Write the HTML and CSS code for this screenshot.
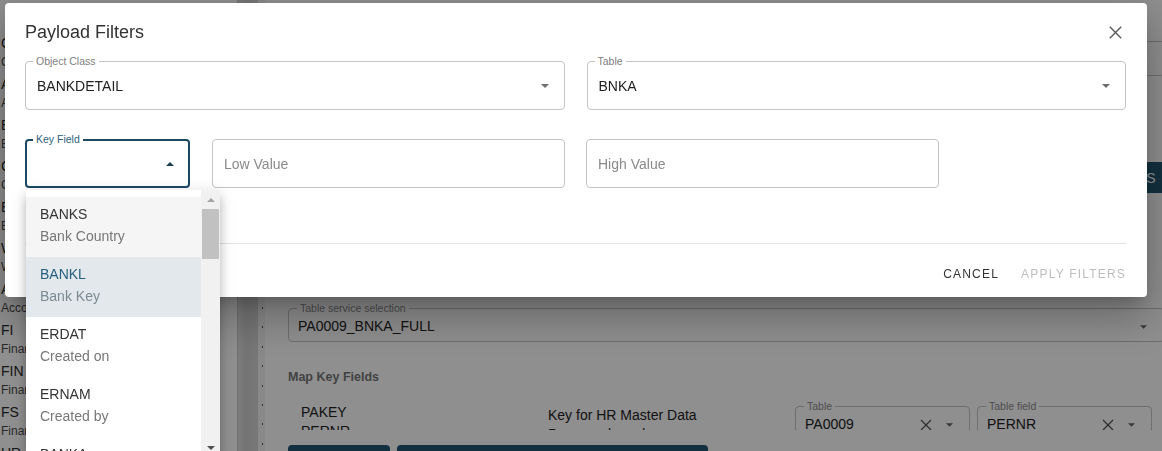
FILE: index.html
```html
<!DOCTYPE html>
<html lang="en">
<head>
<meta charset="utf-8">
<title>Payload Filters</title>
<link rel="stylesheet" href="styles.css">
</head>
<body>
<div class="page">
  <aside class="sidebar">
    <div class="side-item"><div class="side-code">CA</div><div class="side-desc">Cross-Application</div></div>
    <div class="side-item"><div class="side-code">AM</div><div class="side-desc">Asset Management</div></div>
    <div class="side-item"><div class="side-code">BC</div><div class="side-desc">Basis Components</div></div>
    <div class="side-item"><div class="side-code">CO</div><div class="side-desc">Controlling</div></div>
    <div class="side-item"><div class="side-code">EC</div><div class="side-desc">Enterprise Controlling</div></div>
    <div class="side-item"><div class="side-code">WF</div><div class="side-desc">Workflow</div></div>
    <div class="side-item"><div class="side-code">AC</div><div class="side-desc">Accounting</div></div>
    <div class="side-item"><div class="side-code">FI</div><div class="side-desc">Financial Accounting</div></div>
    <div class="side-item"><div class="side-code">FIN</div><div class="side-desc">Financials</div></div>
    <div class="side-item"><div class="side-code">FS</div><div class="side-desc">Financial Services</div></div>
    <div class="side-item"><div class="side-code">HR</div><div class="side-desc">Human Resources</div></div>
  </aside>
  <div class="splitter"></div>
  <div class="gutter"><div class="dots"></div></div>
  <main class="main">
    <div class="bg-field top-field"></div>
    <div class="bg-toolbar"><button class="bg-btn toolbar-btn">FILTERS</button></div>
    <div class="bg-field service">
      <span class="bg-label">Table service selection</span>
      <span class="bg-value">PA0009_BNKA_FULL</span>
      <svg class="bg-caret" width="7" height="4" viewBox="0 0 8 4"><path d="M0 0h8L4 4z"/></svg>
    </div>
    <div class="section-title">Map Key Fields</div>
    <div class="mapping">
      <div class="map-row">
        <div class="map-cell"><div>PAKEY</div><div>PERNR</div></div>
        <div class="map-cell desc-cell"><div>Key for HR Master Data</div><div>Personnel number</div></div>
        <div class="bg-field map-select">
          <span class="bg-label">Table</span>
          <span class="bg-value">PA0009</span>
          <svg class="bg-clear" width="12" height="12" viewBox="0 0 12 12"><path d="M1 1L11 11M11 1L1 11"/></svg>
          <svg class="bg-caret" width="7" height="4" viewBox="0 0 8 4"><path d="M0 0h8L4 4z"/></svg>
        </div>
        <div class="bg-field map-select">
          <span class="bg-label">Table field</span>
          <span class="bg-value">PERNR</span>
          <svg class="bg-clear" width="12" height="12" viewBox="0 0 12 12"><path d="M1 1L11 11M11 1L1 11"/></svg>
          <svg class="bg-caret" width="7" height="4" viewBox="0 0 8 4"><path d="M0 0h8L4 4z"/></svg>
        </div>
      </div>
    </div>
    <div class="bg-actions">
      <button class="bg-btn btn-small">ADD ROW</button>
      <button class="bg-btn btn-wide">SAVE KEY FIELD MAPPING</button>
    </div>
  </main>
</div>

<div class="backdrop"></div>

<div class="dialog" role="dialog">
  <div class="dialog-header">
    <h2 class="dialog-title">Payload Filters</h2>
    <button class="close-btn" aria-label="Close">
      <svg width="13" height="13" viewBox="0 0 13 13"><path d="M0.8 0.8L12.2 12.2M12.2 0.8L0.8 12.2"/></svg>
    </button>
  </div>
  <div class="row row-two">
    <div class="field">
      <span class="field-label">Object Class</span>
      <span class="field-value">BANKDETAIL</span>
      <svg class="caret" width="8" height="4" viewBox="0 0 8 4"><path d="M0 0h8L4 4z"/></svg>
    </div>
    <div class="field">
      <span class="field-label">Table</span>
      <span class="field-value">BNKA</span>
      <svg class="caret" width="8" height="4" viewBox="0 0 8 4"><path d="M0 0h8L4 4z"/></svg>
    </div>
  </div>
  <div class="row row-three">
    <div class="field focused key-field">
      <span class="field-label">Key Field</span>
      <svg class="caret caret-up" width="8" height="4" viewBox="0 0 8 4"><path d="M0 4h8L4 0z"/></svg>
    </div>
    <div class="field low-field"><span class="placeholder">Low Value</span></div>
    <div class="field high-field"><span class="placeholder">High Value</span></div>
  </div>
  <div class="divider"></div>
  <div class="actions">
    <button class="text-btn">CANCEL</button>
    <button class="text-btn disabled">APPLY FILTERS</button>
  </div>
</div>

<div class="menu" role="listbox">
  <div class="menu-list">
    <div class="menu-item hover"><div class="mi-code">BANKS</div><div class="mi-desc">Bank Country</div></div>
    <div class="menu-item selected"><div class="mi-code">BANKL</div><div class="mi-desc">Bank Key</div></div>
    <div class="menu-item"><div class="mi-code">ERDAT</div><div class="mi-desc">Created on</div></div>
    <div class="menu-item"><div class="mi-code">ERNAM</div><div class="mi-desc">Created by</div></div>
    <div class="menu-item"><div class="mi-code">BANKA</div><div class="mi-desc">Name of Bank</div></div>
  </div>
  <div class="scrollbar">
    <div class="sb-btn"><svg width="8" height="4" viewBox="0 0 8 4"><path class="sb-up" d="M0 4h8L4 0z"/></svg></div>
    <div class="sb-thumb"></div>
    <div class="sb-track"></div>
    <div class="sb-btn"><svg width="8" height="4" viewBox="0 0 8 4"><path class="sb-down" d="M0 0h8L4 4z"/></svg></div>
  </div>
</div>
</body>
</html>
```

FILE: styles.css
```css
* { box-sizing: border-box; }

html, body {
  margin: 0;
  padding: 0;
  width: 100%;
  height: 100%;
  overflow: hidden;
}

body {
  font-family: "Liberation Sans", Arial, sans-serif;
  color: #222;
  background: #fff;
}

button {
  font-family: inherit;
  border: none;
  background: none;
  padding: 0;
  margin: 0;
  cursor: pointer;
}

/* ---------- background page ---------- */
.page {
  display: flex;
  height: 451px;
  overflow: hidden;
}

.sidebar {
  width: 237px;
  flex: none;
  background: #fff;
  padding-top: 32px;
  overflow: hidden;
}

.side-item {
  padding: 1px 0 1px 1px;
  white-space: nowrap;
}

.side-code {
  font-size: 14px;
  line-height: 20px;
  color: #2a2a2a;
}

.side-desc {
  font-size: 12px;
  line-height: 19px;
  color: #4a4a4a;
}

.splitter {
  width: 21px;
  flex: none;
  background: linear-gradient(to right, #dedede, #cfcfcf 40%, #d6d6d6);
  border-left: 1px solid #c8c8c8;
}

.gutter {
  width: 7px;
  flex: none;
  background: #f4f4f4;
}

.dots {
  margin-left: 4px;
  width: 1px;
  height: 100%;
  background: repeating-linear-gradient(to bottom, #555 0 2px, transparent 2px 19.4px);
  background-position: 0 16px;
}

.main {
  flex: 1;
  min-width: 0;
  padding-left: 23px;
  display: flex;
  flex-direction: column;
  overflow: hidden;
  background: #fff;
}

.bg-field {
  position: relative;
  border: 1px solid #c4c4c4;
  border-radius: 4px;
  display: flex;
  align-items: center;
}

.top-field {
  margin-top: 41px;
  height: 35px;
  margin-right: -3px;
  flex: none;
}

.bg-toolbar {
  margin-top: 86px;
  height: 31px;
  display: flex;
  justify-content: flex-end;
  flex: none;
}

.bg-btn {
  background: #225772;
  color: #fff;
  border-radius: 4px;
  font-size: 14px;
  letter-spacing: 0.4px;
}

.toolbar-btn {
  height: 31px;
  padding: 0 16px;
  margin-right: -10px;
}

.service {
  margin-top: 115px;
  height: 34px;
  margin-right: -3px;
  padding: 3px 17px 0 9px;
  flex: none;
}

.bg-label {
  position: absolute;
  left: 8px;
  top: -7px;
  padding: 0 3px;
  background: #fff;
  font-size: 10.5px;
  line-height: 12px;
  color: #8a8a8a;
}

.bg-value {
  font-size: 14px;
  line-height: 19px;
  color: #222;
}

.bg-caret {
  margin-left: auto;
  fill: #666;
  flex: none;
}

.bg-clear {
  margin-left: auto;
  margin-right: 14px;
  stroke: #555;
  stroke-width: 1.3;
  fill: none;
  flex: none;
}

.bg-clear + .bg-caret {
  margin-left: 0;
}

.section-title {
  margin-top: 27px;
  font-size: 12.5px;
  font-weight: bold;
  line-height: 16px;
  color: #777;
  flex: none;
}

.mapping {
  margin-top: 10px;
  height: 35px;
  overflow: hidden;
  flex: none;
}

.map-row {
  display: flex;
  padding-left: 13px;
}

.map-cell {
  width: 247px;
  flex: none;
  padding-top: 8px;
  font-size: 14px;
  line-height: 19px;
  color: #222;
}

.desc-cell {
  padding-top: 11px;
}

.map-select {
  width: 175px;
  height: 40px;
  flex: none;
  margin-top: 11px;
  align-items: flex-start;
  padding: 8px 16px 0 9px;
}

.map-select .bg-clear {
  margin-top: 4px;
}

.map-select .bg-caret {
  margin-top: 8px;
}

.map-select + .map-select {
  margin-left: 7px;
}

.bg-actions {
  margin-top: 15px;
  display: flex;
  gap: 7px;
  flex: none;
}

.btn-small {
  width: 102px;
  height: 36px;
}

.btn-wide {
  width: 311px;
  height: 36px;
}

/* ---------- backdrop ---------- */
.backdrop {
  position: fixed;
  inset: 0;
  background: rgba(0, 0, 0, 0.44);
}

/* ---------- dialog ---------- */
.dialog {
  position: absolute;
  left: 5px;
  top: 3px;
  width: 1142px;
  height: 294px;
  background: #fff;
  border-radius: 4px;
  box-shadow: 0 11px 15px -7px rgba(0,0,0,0.2), 0 24px 38px 3px rgba(0,0,0,0.14), 0 9px 46px 8px rgba(0,0,0,0.12);
  padding: 18px 21px 0 20px;
  display: flex;
  flex-direction: column;
}

.dialog-header {
  display: flex;
  align-items: center;
  justify-content: space-between;
  height: 22px;
}

.dialog-title {
  margin: 0;
  font-size: 18px;
  line-height: 22px;
  font-weight: normal;
  color: #333;
}

.close-btn {
  width: 22px;
  height: 22px;
  display: flex;
  align-items: center;
  justify-content: center;
}

.close-btn svg {
  stroke: #5a5a5a;
  stroke-width: 1.4;
  fill: none;
}

.row {
  display: flex;
}

.row-two {
  margin-top: 18px;
  gap: 22px;
}

.row-two .field {
  flex: 1;
}

.row-three {
  margin-top: 29px;
}

.field {
  position: relative;
  height: 49px;
  border: 1px solid #c4c4c4;
  border-radius: 4px;
  display: flex;
  align-items: center;
  padding: 0 15px 0 11px;
}

.field-label {
  position: absolute;
  left: 7px;
  top: -7px;
  padding: 0 3px;
  background: #fff;
  font-size: 10.5px;
  line-height: 12px;
  color: #808080;
}

.field-value {
  font-size: 14px;
  color: #222;
}

.placeholder {
  font-size: 14px;
  color: #8a8a8a;
}

.caret {
  margin-left: auto;
  fill: #6e6e6e;
  flex: none;
}

.key-field {
  width: 165px;
  margin-right: 22px;
}

.focused {
  border: 2px solid #1b4862;
  padding: 0 14px 0 10px;
}

.focused .field-label {
  left: 6px;
  top: -8px;
  color: #2c5f7c;
}

.caret-up {
  fill: #1b3f55;
}

.low-field {
  width: 353px;
  margin-right: 21px;
}

.high-field {
  width: 353px;
}

.divider {
  margin-top: 55px;
  height: 1px;
  background: #e2e2e2;
}

.actions {
  margin-top: 21px;
  display: flex;
  justify-content: flex-end;
  gap: 22px;
}

.text-btn {
  font-size: 12px;
  line-height: 18px;
  letter-spacing: 1.2px;
  color: #333;
}

.text-btn.disabled {
  color: #bdbdbd;
  cursor: default;
}

/* ---------- dropdown menu ---------- */
.menu {
  position: absolute;
  left: 26px;
  top: 190px;
  width: 194px;
  height: 267px;
  background: #fff;
  border-radius: 4px 4px 0 0;
  box-shadow: 0 5px 5px -3px rgba(0,0,0,0.2), 0 8px 10px 1px rgba(0,0,0,0.14), 0 3px 14px 2px rgba(0,0,0,0.12);
  display: flex;
  overflow: hidden;
}

.menu-list {
  flex: 1;
  min-width: 0;
  padding-top: 7px;
}

.menu-item {
  height: 60px;
  padding: 6px 14px 0;
  font-size: 14px;
  line-height: 22px;
}

.menu-item.hover {
  background: #f5f5f5;
}

.menu-item.selected {
  background: #e2e8ec;
}

.mi-code {
  color: #333;
}

.mi-desc {
  color: #777;
}

.selected .mi-code {
  color: #27607f;
}

.selected .mi-desc {
  color: #7d8990;
}

.scrollbar {
  width: 19px;
  flex: none;
  background: #f1f1f1;
  display: flex;
  flex-direction: column;
  align-items: center;
}

.sb-btn {
  height: 19px;
  width: 100%;
  display: flex;
  align-items: center;
  justify-content: center;
  flex: none;
}

.sb-up { fill: #a3a3a3; }
.sb-down { fill: #505050; }

.sb-thumb {
  width: 17px;
  height: 50px;
  background: #c1c1c1;
  flex: none;
}

.sb-track {
  flex: 1;
}
```
